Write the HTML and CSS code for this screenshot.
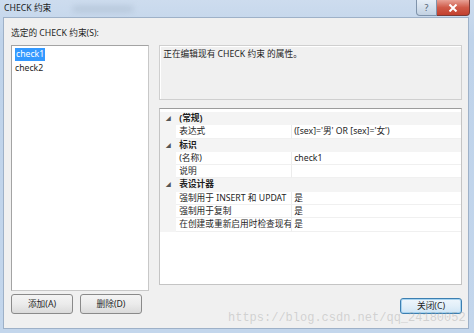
FILE: index.html
```html
<html>
    <head>
        <title>CHECK 约束</title>
        <link rel="stylesheet" href="styles.css">
    </head>
    <body>
        <div id="dialog">
            <div class="titlebar">
                <span class="title">CHECK 约束</span>
                <span class="blur"></span>
                <div class="controls">
                    <div class="helpButton">?</div>
                    <div class="closeButton">
                        <svg width="10" height="8" viewBox="0 0 10 8"><path d="M1.5 0.5 L8.5 7.5 M8.5 0.5 L1.5 7.5" stroke="#fff" stroke-width="2"/></svg>
                    </div>
                </div>
            </div>
            <div class="client">
                <div class="label">选定的 CHECK 约束(S):</div>
                <div class="main">
                    <div class="listbox">
                        <div class="item"><span class="selected">check1</span></div>
                        <div class="item">check2</div>
                    </div>
                    <div class="rightside">
                        <div class="description">正在编辑现有 CHECK 约束 的属性。</div>
                        <div class="propgrid">
                            <div class="row category"><span class="gutter">◢</span><span class="name">(常规)</span></div>
                            <div class="row"><span class="gutter"></span><span class="name">表达式</span><span class="value">([sex]='男' OR [sex]='女')</span></div>
                            <div class="row category"><span class="gutter">◢</span><span class="name">标识</span></div>
                            <div class="row"><span class="gutter"></span><span class="name">(名称)</span><span class="value">check1</span></div>
                            <div class="row"><span class="gutter"></span><span class="name">说明</span><span class="value"></span></div>
                            <div class="row category"><span class="gutter">◢</span><span class="name">表设计器</span></div>
                            <div class="row"><span class="gutter"></span><span class="name">强制用于 INSERT 和 UPDAT</span><span class="value">是</span></div>
                            <div class="row"><span class="gutter"></span><span class="name">强制用于复制</span><span class="value">是</span></div>
                            <div class="row"><span class="gutter"></span><span class="name">在创建或重新启用时检查现有</span><span class="value">是</span></div>
                        </div>
                    </div>
                </div>
                <div class="buttons">
                    <div class="button">添加(A)</div>
                    <div class="button">删除(D)</div>
                    <div class="button focused">关闭(C)</div>
                </div>
            </div>
            <div class="watermark">https://blog.csdn.net/qq_24180052</div>
        </div>
    </body>
</html>
```
FILE: styles.css
```css
body{
    margin: 0;
    background: #c4d7ec;
    font-family: "Noto Sans", "Noto Sans CJK SC", sans-serif;
    font-size: 8.7px;
    color: #1e1e1e;
}
#dialog{
    position: relative;
    width: 474px;
    height: 333px;
    display: flex;
    flex-direction: column;
    background: linear-gradient(#cddcee, #bfd3ea 40px, #c3d6ec);
    overflow: hidden;
}
.titlebar{
    height: 17px;
    display: flex;
    align-items: center;
    padding-left: 4px;
}
.title{
    color: #1a1a1a;
    line-height: 17px;
}
.blur{
    width: 60px;
    height: 6px;
    margin-left: 22px;
    background: #a8b9cc;
    filter: blur(3px);
    opacity: 0.6;
}
.controls{
    margin-left: auto;
    margin-right: 4px;
    align-self: flex-start;
    display: flex;
}
.helpButton{
    width: 19px;
    height: 15px;
    border: 1px solid #7f93ab;
    border-top: none;
    border-radius: 0 0 0 4px;
    background: linear-gradient(#e6eef7, #c2d1e2);
    color: #4d5d70;
    text-align: center;
    line-height: 15px;
    font-size: 9px;
}
.closeButton{
    width: 32px;
    height: 15px;
    border: 1px solid #7a3a35;
    border-top: none;
    border-left: none;
    border-radius: 0 0 4px 0;
    background: linear-gradient(#e8a196, #cf5a48 50%, #c2402e);
    display: flex;
    align-items: center;
    justify-content: center;
}
.client{
    flex: 1;
    margin: 0 5px 4px 3px;
    background: #f0f0f0;
    border: 1px solid #9eb1c8;
    padding: 9px 6px 0 7px;
    display: flex;
    flex-direction: column;
}
.label{
    height: 12px;
    line-height: 12px;
}
.main{
    margin-top: 6px;
    display: flex;
    gap: 10px;
}
.listbox{
    width: 132px;
    height: 240px;
    background: #fff;
    border: 1px solid #a3a3a3;
    border-right-color: #c8c8c8;
    border-bottom-color: #c8c8c8;
    padding: 2px 3px;
}
.item{
    height: 13px;
    line-height: 13px;
    margin-bottom: 1px;
}
.selected{
    display: inline-block;
    background: #3399ff;
    color: #fff;
    padding: 0 1px;
}
.rightside{
    width: 307px;
    display: flex;
    flex-direction: column;
    gap: 8px;
}
.description{
    height: 49px;
    border: 1px solid #cfcfcf;
    box-shadow: inset 1px 1px 0 #fff;
    padding: 2px 3px;
    line-height: 12px;
}
.propgrid{
    height: 172px;
    background: #fff;
    border: 1px solid #c4c4c4;
    border-top-color: #9c9c9c;
    padding-top: 3px;
}
.row{
    height: 13.3px;
    display: flex;
    line-height: 13px;
}
.gutter{
    flex: none;
    width: 16px;
    background: #f4f4f4;
    font-size: 5px;
    color: #555;
    text-align: center;
}
.name{
    flex: none;
    width: 112px;
    padding-left: 3px;
    white-space: nowrap;
    overflow: hidden;
    border-bottom: 1px solid #f0f0f0;
}
.value{
    flex: 1;
    padding-left: 2px;
    border-left: 1px solid #ececec;
    border-bottom: 1px solid #f0f0f0;
}
.category .name{
    flex: 1;
    width: auto;
    background: #f4f4f4;
    font-weight: bold;
    border-bottom: none;
}
.buttons{
    margin-top: 3px;
    display: flex;
    align-items: flex-end;
    gap: 7px;
}
.button{
    width: 60px;
    height: 18px;
    border: 1px solid #8a8a8a;
    border-radius: 3px;
    background: linear-gradient(#f4f4f4, #ebebeb 50%, #dadada);
    text-align: center;
    line-height: 18px;
}
.focused{
    margin-left: auto;
    height: 14px;
    line-height: 14px;
    border-color: #3c7fb1;
    box-shadow: inset 0 0 0 1px #a6d3f0;
    background: linear-gradient(#eef6fc, #e2eff9 50%, #cfe5f5);
}
.watermark{
    position: absolute;
    left: 228px;
    top: 311px;
    font-family: "Liberation Mono", monospace;
    font-size: 12px;
    color: rgba(170, 170, 170, 0.45);
}
```
